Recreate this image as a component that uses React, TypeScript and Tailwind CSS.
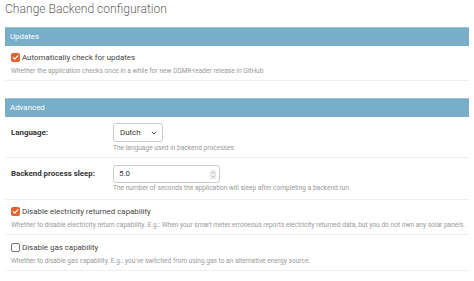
import React from 'react';

function Check({ checked }: { checked: boolean }) {
  if (checked) {
    return (
      <span className="flex h-[9px] w-[9px] shrink-0 items-center justify-center rounded-[2px] bg-[#e5612f]">
        <svg viewBox="0 0 10 10" className="h-[7px] w-[7px]">
          <path d="M1.8 5.2 L4 7.3 L8.3 2.6" fill="none" stroke="#fff" strokeWidth="1.8" strokeLinecap="round" strokeLinejoin="round" />
        </svg>
      </span>
    );
  }
  return <span className="h-[9px] w-[9px] shrink-0 rounded-[2px] border border-[#767676] bg-white" />;
}

function Header({ title }: { title: string }) {
  return (
    <div className="flex h-[19px] items-center border-t border-[#9cc4d8] bg-[#79aec8] pl-[5px] text-[7.9px] text-white">
      {title}
    </div>
  );
}

function CheckRow({ label, help, checked, height, pt }: { label: string; help: string; checked: boolean; height: string; pt: string }) {
  return (
    <div className={`${height} ${pt} border-b border-[#eee] pl-[6px]`}>
      <div className="flex h-[9px] items-center gap-[2px]">
        <Check checked={checked} />
        <span className="text-[7.9px] leading-[9px] text-[#444]">{label}</span>
      </div>
      <div className="mt-[5px] whitespace-nowrap text-[6.6px] leading-[9px] text-[#999]">{help}</div>
    </div>
  );
}

export default function App() {
  return (
    <div className="h-[281px] w-[474px] overflow-hidden bg-white px-[5px] font-['Roboto',sans-serif]">
      <div className="h-[27px] pt-[1px] text-[12.1px] font-light leading-[16px] text-[#666]">Change Backend configuration</div>

      <Header title="Updates" />
      <CheckRow
        checked
        height="h-[35px]"
        pt="pt-[7px]"
        label="Automatically check for updates"
        help="Whether the application checks once in a while for new DSMR-reader release in GitHub"
      />

      <div className="h-[17px]" />

      <Header title="Advanced" />

      <div className="h-[41px] border-b border-[#eee] px-[6px] pt-[6px]">
        <div className="flex items-center">
          <span className="w-[102px] text-[7.9px] font-bold text-[#333]">Language:</span>
          <div className="flex h-[19px] w-[50px] items-center justify-between rounded-[3px] border border-[#ccc] bg-white pl-[6px] pr-[5px] text-[7.9px] text-[#333]">
            <span>Dutch</span>
            <svg viewBox="0 0 10 10" className="h-[6px] w-[6px]">
              <path d="M2 3.5 L5 6.5 L8 3.5" fill="none" stroke="#333" strokeWidth="1.6" strokeLinecap="round" strokeLinejoin="round" />
            </svg>
          </div>
        </div>
        <div className="ml-[102px] mt-[2px] text-[6.6px] leading-[9px] text-[#999]">The language used in backend processes</div>
      </div>

      <div className="h-[42px] border-b border-[#eee] px-[6px] pt-[7px]">
        <div className="flex items-center">
          <span className="w-[102px] text-[7.9px] font-bold text-[#333]">Backend process sleep:</span>
          <div className="flex h-[18px] w-[107px] items-center justify-between rounded-[3px] border border-[#ccc] bg-white pl-[5px] pr-[3px] text-[7.9px] text-[#333]">
            <span>5.0</span>
            <svg viewBox="0 0 8 12" className="h-[9px] w-[6px]">
              <rect x="0.5" y="0.5" width="7" height="11" rx="1.5" fill="#f3f3f3" stroke="#c8c8c8" strokeWidth="0.6" />
              <path d="M2.3 4.5 L4 2.8 L5.7 4.5 M2.3 7.5 L4 9.2 L5.7 7.5" fill="none" stroke="#777" strokeWidth="0.8" />
            </svg>
          </div>
        </div>
        <div className="ml-[102px] mt-[1px] whitespace-nowrap text-[6.6px] leading-[9px] text-[#999]">
          The number of seconds the application will sleep after completing a backend run.
        </div>
      </div>

      <CheckRow
        checked
        height="h-[35px]"
        pt="pt-[7px]"
        label="Disable electricity returned capability"
        help="Whether to disable electricity return capability. E.g.: When your smart meter erroneous reports electricity returned data, but you do not own any solar panels."
      />
      <CheckRow
        checked={false}
        height="h-[36px]"
        pt="pt-[8px]"
        label="Disable gas capability"
        help="Whether to disable gas capability. E.g.: you've switched from using gas to an alternative energy source."
      />
    </div>
  );
}
